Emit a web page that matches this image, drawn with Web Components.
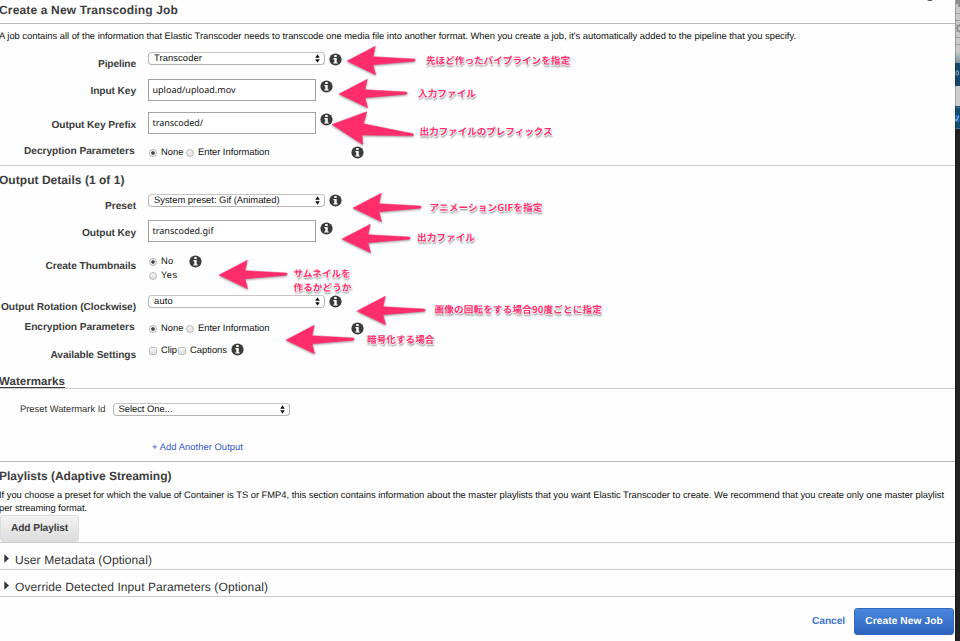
<!DOCTYPE html>
<html lang="en">
<head>
<meta charset="utf-8">
<title>Create a New Transcoding Job</title>
<style>
	body {
		margin: 0;
		width: 960px;
		height: 641px;
		overflow: hidden;
		background: #fefefe;
		font-family: "Liberation Sans", Arial, sans-serif;
		font-size: 9.400px;
		text-rendering: geometricPrecision;
		color: #111;
	}
</style>
</head>
<body>
<transcoding-page></transcoding-page>

<script>
// Text that spreads its letters so the run takes exactly `w` pixels
class FitText extends HTMLElement {
	constructor() {
		super();
		this.attachShadow({ mode: "open" });
		this.shadowRoot.innerHTML = `
		<style>
			:host { display: inline-block; white-space: nowrap; }
		</style>
		<slot></slot>
		`;
	}

	connectedCallback() {
		const target = parseFloat(this.getAttribute("w"));
		const count = this.textContent.length;
		const natural = this.getBoundingClientRect().width;
		if (natural > 0 && count > 1) {
			const gap = (target - natural) / count;
			this.style.letterSpacing = `${gap.toFixed(4)}px`;
		}
	}
}

class InfoIcon extends HTMLElement {
	constructor() {
		super();
		this.attachShadow({ mode: "open" });
		this.shadowRoot.innerHTML = `
		<style>
			:host { display: block; flex: none; width: 13px; height: 13px; }
			svg { display: block; }
		</style>
		<svg width="13" height="13" viewBox="0 0 13 13">
			<circle cx="6.5" cy="6.5" r="6.1" fill="#3b3b3b"/>
			<rect x="5.2" y="2" width="2.500" height="2" rx=".5" fill="#fff"/>
			<path d="M4.4 5h3.300v4.400h1v1.200H4.300V9.400h1V6.200h-.9z" fill="#fff"/>
		</svg>
		`;
	}
}

class SelectBox extends HTMLElement {
	constructor() {
		super();
		this.attachShadow({ mode: "open" });
		this.shadowRoot.innerHTML = `
		<style>
			:host {
				display: flex;
				flex: none;
				justify-content: space-between;
				align-items: center;
				box-sizing: border-box;
				width: 177px;
				height: 13px;
				padding: 0 4px 0 5px;
				border: 1px solid #b4b4b4;
				border-top-color: #c4c4c4;
				border-radius: 4px;
				background: #fff;
				line-height: 10px;
				color: #111;
			}
			::slotted(*) { margin-bottom: 1px; }
			svg { display: block; }
		</style>
		<slot></slot>
		<svg width="5" height="9" viewBox="0 0 5 9">
			<path d="M2.500.3L4.800 3.800H.2zM2.500 8.700L.2 5.200h4.600z" fill="#111"/>
		</svg>
		`;
	}
}

class TextBox extends HTMLElement {
	constructor() {
		super();
		this.attachShadow({ mode: "open" });
		this.shadowRoot.innerHTML = `
		<style>
			:host {
				display: flex;
				flex: none;
				align-items: center;
				box-sizing: border-box;
				width: 168px;
				height: 22px;
				padding: 0 0 1px 3.500px;
				border: 1px solid #a2a2a2;
				background: #fff;
				font-family: "Noto Sans", sans-serif;
				font-size: 9px;
				color: #111;
			}
		</style>
		<slot></slot>
		`;
	}
}

class ChoiceItem extends HTMLElement {
	constructor() {
		super();
		this.attachShadow({ mode: "open" });
		this.shadowRoot.innerHTML = `
		<style>
			:host { display: flex; align-items: flex-start; height: 13px; line-height: 11px; }
			i {
				box-sizing: border-box;
				width: 8px;
				height: 8px;
				margin: 3px 4px 0 1px;
				border: 1px solid #b9b9b9;
				border-radius: 1.500px;
				background: linear-gradient(#f6f6f6, #dedede);
			}
			:host([type="radio"]) i { border-radius: 50%; }
			:host([checked]) i {
				background: radial-gradient(circle, #444 0 1.400px, #e9e9e9 2px);
			}
		</style>
		<i></i><slot></slot>
		`;
	}
}

// Label on the left, controls on the right
class FormRow extends HTMLElement {
	constructor() {
		super();
		this.attachShadow({ mode: "open" });
		this.shadowRoot.innerHTML = `
		<style>
			:host {
				display: grid;
				grid-template-columns: 136px 1fr;
				column-gap: 12px;
				align-items: start;
				height: var(--h);
			}
			.label {
				justify-self: end;
				padding-top: var(--label, 7px);
				padding-right: var(--inset, 0px);
				font-size: 10.200px;
				font-weight: bold;
				line-height: 12px;
				color: #3d3d3d;
			}
			.controls { display: flex; padding-top: var(--top, 0px); }
		</style>
		<div class="label"><slot name="label"></slot></div>
		<div class="controls"><slot></slot></div>
		`;
	}
}

class SectionTitle extends HTMLElement {
	constructor() {
		super();
		this.attachShadow({ mode: "open" });
		this.shadowRoot.innerHTML = `
		<style>
			:host {
				display: block;
				box-sizing: border-box;
				margin-left: -1px;
				font-size: 12px;
				font-weight: bold;
				line-height: 14px;
				color: #3d3d3d;
			}
		</style>
		<slot></slot>
		`;
	}
}

class CollapsedSection extends HTMLElement {
	constructor() {
		super();
		this.attachShadow({ mode: "open" });
		this.shadowRoot.innerHTML = `
		<style>
			:host {
				display: flex;
				align-items: flex-start;
				box-sizing: border-box;
				height: 27px;
				padding: 10px 0 0 4px;
				border-bottom: 1px solid #c9c9c9;
				font-size: 12px;
				line-height: 14px;
				color: #333;
			}
			svg { display: block; margin: 1px 6px 0 0; }
		</style>
		<svg width="5" height="9" viewBox="0 0 5 9"><path d="M.3.3L5 4.500.3 8.700z" fill="#333"/></svg>
		<slot></slot>
		`;
	}
}

class PushButton extends HTMLElement {
	constructor() {
		super();
		this.attachShadow({ mode: "open" });
		this.shadowRoot.innerHTML = `
		<style>
			:host {
				display: flex;
				align-items: center;
				justify-content: center;
				box-sizing: border-box;
				width: 79px;
				height: 27px;
				padding-bottom: 1px;
				border: 1px solid #dcdcdc;
				border-radius: 3px;
				background: linear-gradient(#f3f3f3, #dcdcdc);
				font-size: 10.200px;
				font-weight: bold;
				color: #3d3d3d;
			}
			:host([primary]) {
				width: 100px;
				padding-bottom: 0;
				border-color: #2f68c4;
				background: linear-gradient(#4a87df, #2d62bd);
				color: #fff;
			}
		</style>
		<slot></slot>
		`;
	}
}

// Slice of the console that stays visible behind the dialog
class BackgroundStrip extends HTMLElement {
	constructor() {
		super();
		this.attachShadow({ mode: "open" });
		this.shadowRoot.innerHTML = `
		<style>
			:host { display: block; background: #202223; }
			svg { display: block; }
		</style>
		<svg width="5" height="641" viewBox="0 0 5 641">
			<defs>
				<linearGradient id="fade" x1="0" y1="0" x2="0" y2="1">
					<stop offset="0" stop-color="#bcc4c6"/><stop offset="1" stop-color="#8094a0"/>
				</linearGradient>
			</defs>
			<rect width="5" height="53" fill="#c9c9c9"/>
			<path d="M0 13.500h5M0 20.500h5M0 37.500h5M0 44.500h5" stroke="#a5a5a5"/>
			<path d="M1 0h4v7H3V4H1z" fill="#8b8b8b"/>
			<path d="M5 23.500L3.500 25 1.500 24.500 2 27 .5 28l1.500 1.500L1.500 32l2-.5L5 33v-2.500a2 2 0 0 1 0-4z" fill="#8e8e8e"/>
			<rect y="53" width="5" height="10" fill="url(#fade)"/>
			<rect y="63" width="5" height="23" fill="#16486b"/>
			<rect x="1" y="71" width="2.500" height="4" rx="1" fill="none" stroke="#b9cad6" stroke-width=".8"/>
			<rect y="86" width="5" height="20" fill="#cecece"/>
			<rect y="106" width="5" height="23" fill="#164c73"/>
			<path d="M0 107.500h5M0 128.500h5" stroke="#4f7b99" stroke-width=".8"/>
			<rect y="115" width="4" height="7" fill="#2b6fc1"/>
			<path d="M0 119l1 2 3-5" fill="none" stroke="#a9cdf0" stroke-width=".8"/>
			<path d="M.5 0v641" stroke="#000" stroke-opacity=".22"/>
		</svg>
		`;
	}
}

class NoteArrow extends HTMLElement {
	constructor() {
		super();
		this.attachShadow({ mode: "open" });
	}

	connectedCallback() {
		const shape = this.hasAttribute("slanted")
			? "M0 13.500L34.700.7 31.500 12.800 81 22.700Q82.500 23.500 81 24.800L30 24 30.700 33.500z"
			: "M0 15L28.300.3 26 10.700 67.500 13Q69 14 67.500 15.200L26 18.800 28.700 28.800z";
		this.shadowRoot.innerHTML = `
		<style>
			:host {
				position: absolute;
				left: ${this.getAttribute("x")}px;
				top: ${this.getAttribute("y")}px;
			}
			svg { display: block; overflow: visible; filter: drop-shadow(.5px 1.500px 1px rgba(0,0,0,.4)); }
		</style>
		<svg width="84" height="35" viewBox="0 0 84 35">
			<path d="${shape}" fill="#ff2d6c" stroke="#ff2d6c" stroke-width=".5" stroke-linejoin="round"/>
		</svg>
		`;
	}
}

class NoteText extends HTMLElement {
	constructor() {
		super();
		this.attachShadow({ mode: "open" });
	}

	connectedCallback() {
		this.shadowRoot.innerHTML = `
		<style>
			:host {
				position: absolute;
				left: ${this.getAttribute("x")}px;
				top: ${this.getAttribute("y")}px;
				font-family: "Noto Sans CJK JP", "Liberation Sans", sans-serif;
				font-size: 9.600px;
				font-weight: bold;
				line-height: 14px;
				color: #ff2d6c;
				text-shadow: 0 0 1px #fff, 1px 0 1px #fff, -1px 0 1px #fff, 0 -1px 1px #fff,
					0 1px 1px #fff, .5px 2px 2px rgba(0,0,0,.6);
			}
		</style>
		<slot></slot>
		`;
	}
}

class TranscodingPage extends HTMLElement {
	constructor() {
		super();
		this.attachShadow({ mode: "open" });
		this.shadowRoot.innerHTML = `
		<style>
			:host {
				display: grid;
				grid-template-columns: 955px 5px;
				height: 641px;
				position: relative;
				overflow: hidden;
			}
			main { display: flex; flex-direction: column; min-width: 0; overflow: hidden; }
			main > * { flex: none; }
			header {
				display: flex;
				justify-content: space-between;
				box-sizing: border-box;
				height: 24px;
				padding-top: 3px;
				border-bottom: 1px solid #b9b9b9;
			}
			.close {
				width: 10px;
				height: 10px;
				margin: -12px 20px 0 0;
				border-radius: 50%;
				background: #444;
			}
			.intro { height: 22px; padding-top: 6px; margin-left: -1px; line-height: 12px; }
			info-icon { margin-left: 4px; }
			.details { height: 206px; border-top: 1px solid #cbcbcb; box-sizing: border-box; }
			.details section-title { height: 28px; padding-top: 7px; }
			.stack { display: grid; row-gap: 1px; }
			.watermarks { height: 70px; }
			.watermarks section-title {
				height: 18px;
				margin: 0;
				padding-top: 5px;
				border-bottom: 1px solid #cbcbcb;
				font-size: 11.500px;
			}
			.watermarks section-title fit-text {
				box-sizing: border-box;
				height: 12px;
				margin-left: -1px;
				border-bottom: 1px solid #3d3d3d;
				line-height: 13px;
				vertical-align: top;
			}
			.preset { display: flex; align-items: center; gap: 7px; margin: 14px 0 0 20px; color: #333; }
			.preset > fit-text { margin-bottom: 2px; }
			.add { height: 20px; padding-left: 152px; line-height: 12px; color: #3358c4; }
			.playlists { box-sizing: border-box; height: 82px; border-top: 1px solid #b9b9b9; border-bottom: 1px solid #c9c9c9; }
			.playlists section-title { height: 26px; padding-top: 7px; }
			.playlists p { margin: 0 0 0 -1px; line-height: 13px; height: 27px; }
			footer { display: flex; justify-content: flex-end; align-items: center; gap: 9px; padding: 11px 1px 0 0; }
			.cancel { font-size: 10.200px; font-weight: bold; color: #3c73d6; }
		</style>
		<main>
			<header>
				<section-title><fit-text w="179">Create a New Transcoding Job</fit-text></section-title>
				<div class="close"></div>
			</header>
			<div class="intro"><fit-text w="797">A job contains all of the information that Elastic Transcoder needs to transcode one media file into another format. When you create a job, it's automatically added to the pipeline that you specify.</fit-text></div>
			<form-row style="--h: 27px">
				<fit-text slot="label" w="38">Pipeline</fit-text>
				<select-box><fit-text w="48">Transcoder</fit-text></select-box><info-icon style="margin-top: 1px"></info-icon>
			</form-row>
			<form-row style="--h: 33px">
				<fit-text slot="label" w="45.500">Input Key</fit-text>
				<text-box><fit-text w="83">upload/upload.mov</fit-text></text-box><info-icon style="margin-top: 1px"></info-icon>
			</form-row>
			<form-row style="--h: 33px; --label: 8px">
				<fit-text slot="label" w="84.500">Output Key Prefix</fit-text>
				<text-box><fit-text w="50.500">transcoded/</fit-text></text-box><info-icon style="margin-top: 1px"></info-icon>
			</form-row>
			<form-row style="--h: 20px; --label: 1px; --inset: 1.500px; --top: 1px">
				<fit-text slot="label" w="110.500">Decryption Parameters</fit-text>
				<choice-item type="radio" checked><fit-text w="22.500">None</fit-text></choice-item>
				<choice-item type="radio" style="margin-left: 1.500px"><fit-text w="71.500">Enter Information</fit-text></choice-item>
				<info-icon style="margin-left: 81px"></info-icon>
			</form-row>

			<section class="details">
				<section-title><fit-text w="125.500">Output Details (1 of 1)</fit-text></section-title>
				<form-row style="--h: 26px">
					<fit-text slot="label" w="31">Preset</fit-text>
					<select-box><fit-text w="125.500">System preset: Gif (Animated)</fit-text></select-box><info-icon></info-icon>
				</form-row>
				<form-row style="--h: 35px; --label: 8px">
					<fit-text slot="label" w="54">Output Key</fit-text>
					<text-box><fit-text w="61">transcoded.gif</fit-text></text-box><info-icon style="margin-top: 2px"></info-icon>
				</form-row>
				<form-row style="--h: 40px; --label: 6px">
					<fit-text slot="label" w="90.500">Create Thumbnails</fit-text>
					<div class="stack">
						<choice-item type="radio" checked><fit-text w="12.500">No</fit-text></choice-item>
						<choice-item type="radio"><fit-text w="16.500">Yes</fit-text></choice-item>
					</div>
					<info-icon style="margin-left: 11.500px"></info-icon>
				</form-row>
				<form-row style="--h: 26px">
					<fit-text slot="label" w="135">Output Rotation (Clockwise)</fit-text>
					<select-box><fit-text w="19">auto</fit-text></select-box><info-icon></info-icon>
				</form-row>
				<form-row style="--h: 22px; --label: 1px; --inset: 1.500px; --top: 1px">
					<fit-text slot="label" w="110">Encryption Parameters</fit-text>
					<choice-item type="radio" checked><fit-text w="22.500">None</fit-text></choice-item>
					<choice-item type="radio" style="margin-left: 1.500px"><fit-text w="71.500">Enter Information</fit-text></choice-item>
					<info-icon style="margin-left: 81px"></info-icon>
				</form-row>
				<form-row style="--h: 28px">
					<fit-text slot="label" w="85.500">Available Settings</fit-text>
					<choice-item style="margin-top: 1px"><fit-text w="16">Clip</fit-text></choice-item>
					<choice-item style="margin-top: 1px"><fit-text w="37">Captions</fit-text></choice-item>
					<info-icon style="margin-left: 4px"></info-icon>
				</form-row>
			</section>

			<section class="watermarks">
				<section-title><fit-text w="66">Watermarks</fit-text></section-title>
				<div class="preset">
					<fit-text w="85.500">Preset Watermark Id</fit-text>
					<select-box><fit-text w="54">Select One...</fit-text></select-box>
				</div>
			</section>
			<div class="add"><fit-text w="91">+ Add Another Output</fit-text></div>

			<section class="playlists">
				<section-title><fit-text w="172.500">Playlists (Adaptive Streaming)</fit-text></section-title>
				<p><fit-text w="945">If you choose a preset for which the value of Container is TS or FMP4, this section contains information about the master playlists that you want Elastic Transcoder to create. We recommend that you create only one master playlist</fit-text><br><fit-text w="88">per streaming format.</fit-text></p>
				<push-button><fit-text w="57">Add Playlist</fit-text></push-button>
			</section>
			<collapsed-section><fit-text w="137">User Metadata (Optional)</fit-text></collapsed-section>
			<collapsed-section><fit-text w="253">Override Detected Input Parameters (Optional)</fit-text></collapsed-section>
			<footer>
				<fit-text class="cancel" w="33">Cancel</fit-text>
				<push-button primary><fit-text w="77.500">Create New Job</fit-text></push-button>
			</footer>
		</main>
		<background-strip></background-strip>

		<note-arrow x="346.500" y="45.500"></note-arrow>
		<note-text x="426" y="53"><fit-text w="144">先ほど作ったパイプラインを指定</fit-text></note-text>
		<note-arrow x="338.500" y="78.500"></note-arrow>
		<note-text x="418" y="86"><fit-text w="58">入力ファイル</fit-text></note-text>
		<note-arrow x="332" y="110.500" slanted></note-arrow>
		<note-text x="419.500" y="124"><fit-text w="133">出力ファイルのプレフィックス</fit-text></note-text>
		<note-arrow x="352.500" y="193"></note-arrow>
		<note-text x="429.500" y="200"><fit-text w="113">アニメーションGIFを指定</fit-text></note-text>
		<note-arrow x="342" y="223.500"></note-arrow>
		<note-text x="417" y="230"><fit-text w="58">出力ファイル</fit-text></note-text>
		<note-arrow x="218.500" y="260"></note-arrow>
		<note-text x="293.500" y="266"><fit-text w="57">サムネイルを</fit-text><br><fit-text w="58">作るかどうか</fit-text></note-text>
		<note-arrow x="357" y="295.500"></note-arrow>
		<note-text x="434.500" y="302"><fit-text w="167.500">画像の回転をする場合90度ごとに指定</fit-text></note-text>
		<note-arrow x="286" y="324.500"></note-arrow>
		<note-text x="367" y="332"><fit-text w="67.500">暗号化する場合</fit-text></note-text>
		`;
	}
}

customElements.define("info-icon", InfoIcon);
customElements.define("select-box", SelectBox);
customElements.define("text-box", TextBox);
customElements.define("choice-item", ChoiceItem);
customElements.define("form-row", FormRow);
customElements.define("section-title", SectionTitle);
customElements.define("collapsed-section", CollapsedSection);
customElements.define("push-button", PushButton);
customElements.define("background-strip", BackgroundStrip);
customElements.define("note-arrow", NoteArrow);
customElements.define("note-text", NoteText);
customElements.define("transcoding-page", TranscodingPage);
// Last, so that every run is measured inside its styled parent
customElements.define("fit-text", FitText);
</script>
</body>
</html>
